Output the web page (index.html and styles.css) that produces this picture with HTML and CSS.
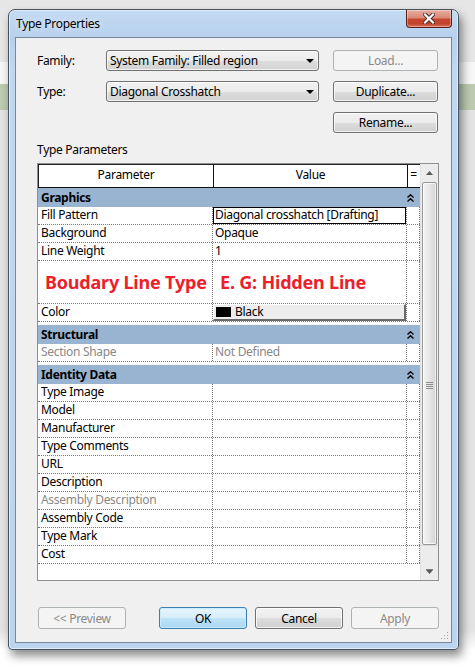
FILE: index.html
```html
<!DOCTYPE html>
<html>
<head>
<meta charset="utf-8">
<link rel="stylesheet" href="styles.css">
</head>
<body>
<div class="window">
  <div class="titlebar">
    <span class="title">Type Properties</span>
    <div class="close">
      <svg width="12" height="11" viewBox="0 0 12 11"><path d="M2 1.5 L10 9.5 M10 1.5 L2 9.5" stroke="#4a2420" stroke-width="4" stroke-linecap="square"/><path d="M2 1.5 L10 9.5 M10 1.5 L2 9.5" stroke="#ffffff" stroke-width="2.2" stroke-linecap="square"/></svg>
    </div>
  </div>
  <div class="client">
    <div class="selectors">
      <span class="lbl">Family:</span>
      <div class="combo"><span>System Family: Filled region</span><svg width="8" height="4" viewBox="0 0 8 4"><polygon points="0,0 8,0 4,4" fill="#000"/></svg></div>
      <button class="btn disabled">Load...</button>
      <span class="lbl">Type:</span>
      <div class="combo"><span>Diagonal Crosshatch</span><svg width="8" height="4" viewBox="0 0 8 4"><polygon points="0,0 8,0 4,4" fill="#000"/></svg></div>
      <button class="btn">Duplicate...</button>
      <span></span><span></span>
      <button class="btn">Rename...</button>
    </div>
    <div class="section-label">Type Parameters</div>
    <div class="table">
      <div class="grid">
        <div class="head">
          <div class="hc">Parameter</div>
          <div class="hc">Value</div>
          <div class="hc eq">=</div>
        </div>
        <div class="group first"><span>Graphics</span><svg class="chev" width="7" height="8" viewBox="0 0 7 8"><path d="M0.5 3.5 L3.5 0.8 L6.5 3.5 M0.5 7.5 L3.5 4.8 L6.5 7.5" stroke="#000" stroke-width="1.4" fill="none"/></svg></div>
        <div class="row"><div class="c p">Fill Pattern</div><div class="c v sel">Diagonal crosshatch [Drafting]</div><div class="c e"></div></div>
        <div class="row"><div class="c p">Background</div><div class="c v">Opaque</div><div class="c e"></div></div>
        <div class="row"><div class="c p">Line Weight</div><div class="c v">1</div><div class="c e"></div></div>
        <div class="row big"><div class="c p red">Boudary Line Type</div><div class="c v red">E. G: Hidden Line</div><div class="c e"></div></div>
        <div class="row"><div class="c p">Color</div><div class="c v"><div class="colorbtn"><span class="swatch"></span>Black</div></div><div class="c e"></div></div>
        <div class="group"><span>Structural</span><svg class="chev" width="7" height="8" viewBox="0 0 7 8"><path d="M0.5 3.5 L3.5 0.8 L6.5 3.5 M0.5 7.5 L3.5 4.8 L6.5 7.5" stroke="#000" stroke-width="1.4" fill="none"/></svg></div>
        <div class="row"><div class="c p dim">Section Shape</div><div class="c v dim">Not Defined</div><div class="c e"></div></div>
        <div class="group"><span>Identity Data</span><svg class="chev" width="7" height="8" viewBox="0 0 7 8"><path d="M0.5 3.5 L3.5 0.8 L6.5 3.5 M0.5 7.5 L3.5 4.8 L6.5 7.5" stroke="#000" stroke-width="1.4" fill="none"/></svg></div>
        <div class="row"><div class="c p">Type Image</div><div class="c v"></div><div class="c e"></div></div>
        <div class="row"><div class="c p">Model</div><div class="c v"></div><div class="c e"></div></div>
        <div class="row"><div class="c p">Manufacturer</div><div class="c v"></div><div class="c e"></div></div>
        <div class="row"><div class="c p">Type Comments</div><div class="c v"></div><div class="c e"></div></div>
        <div class="row"><div class="c p">URL</div><div class="c v"></div><div class="c e"></div></div>
        <div class="row"><div class="c p">Description</div><div class="c v"></div><div class="c e"></div></div>
        <div class="row"><div class="c p dim">Assembly Description</div><div class="c v"></div><div class="c e"></div></div>
        <div class="row"><div class="c p">Assembly Code</div><div class="c v"></div><div class="c e"></div></div>
        <div class="row"><div class="c p">Type Mark</div><div class="c v"></div><div class="c e"></div></div>
        <div class="row"><div class="c p">Cost</div><div class="c v"></div><div class="c e"></div></div>
      </div>
      <div class="scrollbar">
        <div class="sb-btn"><svg width="7" height="4" viewBox="0 0 7 4"><polygon points="0,4 3.5,0 7,4" fill="#5a5a5a"/></svg></div>
        <div class="thumb">
          <svg width="7" height="8" viewBox="0 0 7 8"><path d="M0 0.5 H7 M0 2.5 H7 M0 4.5 H7 M0 6.5 H7" stroke="#8c8c8c" stroke-width="1"/></svg>
        </div>
        <div class="sb-track"></div>
        <div class="sb-btn"><svg width="7" height="5" viewBox="0 0 7 5"><path d="M0 0.5 H7" stroke="#7a7a7a"/><polygon points="0,1 7,1 3.5,5" fill="#5a5a5a"/></svg></div>
      </div>
    </div>
    <div class="buttons">
      <button class="btn disabled preview">&lt;&lt; Preview</button>
      <button class="btn default">OK</button>
      <button class="btn">Cancel</button>
      <button class="btn disabled">Apply</button>
    </div>
    <svg class="grip" width="9" height="9" viewBox="0 0 9 9">
      <rect x="7" y="1" width="1" height="1" fill="#9aa4ad"/>
      <rect x="4" y="4" width="1" height="1" fill="#9aa4ad"/><rect x="7" y="4" width="1" height="1" fill="#9aa4ad"/>
      <rect x="1" y="7" width="1" height="1" fill="#9aa4ad"/><rect x="4" y="7" width="1" height="1" fill="#9aa4ad"/><rect x="7" y="7" width="1" height="1" fill="#9aa4ad"/>
    </svg>
  </div>
</div>
</body>
</html>
```

FILE: styles.css
```css
* { box-sizing: border-box; }

html, body {
  margin: 0;
  width: 475px;
  height: 669px;
  overflow: hidden;
}

body {
  font-family: "Noto Sans", "Segoe UI", sans-serif;
  font-size: 12px;
  letter-spacing: -0.3px;
  color: #000;
  background: linear-gradient(to bottom,
    #e6e6e6 0, #e6e6e6 62px,
    #f7f7f7 62px, #f7f7f7 84px,
    #bccab0 84px, #bccab0 110px,
    #e3e3e3 110px, #e3e3e3 630px,
    #ffffff 650px);
}

.window {
  margin: 9px 0 0 8px;
  width: 451px;
  height: 641px;
  border: 1px solid #46525e;
  border-radius: 7px 7px 4px 4px;
  background: linear-gradient(to bottom, #c3daf2 0, #b7d1ed 28px, #bfd7f0 60px, #bcd5ef 100%);
  box-shadow: inset 0 0 0 1px rgba(255,255,255,0.55), 3px 6px 10px rgba(0,0,0,0.45);
  padding: 0 6px 6px 6px;
  display: flex;
  flex-direction: column;
}

.titlebar {
  height: 27px;
  display: flex;
  align-items: flex-start;
}

.title {
  padding: 6px 0 0 1px;
  font-size: 12px;
  line-height: 15px;
  text-shadow: 0 0 6px rgba(255,255,255,0.9);
}

.close {
  margin-left: auto;
  width: 46px;
  height: 18px;
  border: 1px solid #5a2018;
  border-top: none;
  border-radius: 0 0 4px 4px;
  background: linear-gradient(to bottom, #e8ad9f 0%, #d98a77 45%, #c7462f 55%, #c2422c 80%, #d8735c 100%);
  box-shadow: inset 0 0 0 1px rgba(255,255,255,0.35);
  display: flex;
  align-items: center;
  justify-content: center;
}

.client {
  flex: 1;
  position: relative;
  border: 1px solid #76889a;
  background: #f0f0f0;
  padding: 12px 0 0 21px;
}

.selectors {
  display: grid;
  grid-template-columns: 69px 213px 119px;
  grid-template-rows: 21px 21px 21px;
  row-gap: 10px;
  align-items: center;
}

.lbl {
  line-height: 15px;
}

.combo {
  height: 21px;
  border: 1px solid #707070;
  border-radius: 3px;
  background: linear-gradient(to bottom, #f2f2f2 0%, #ebebeb 50%, #dddddd 51%, #d2d2d2 100%);
  box-shadow: inset 0 0 0 1px rgba(255,255,255,0.7);
  display: flex;
  align-items: center;
  justify-content: space-between;
  padding: 0 4px 0 3px;
  line-height: 15px;
}

.btn {
  font: inherit;
  letter-spacing: inherit;
  color: #000;
  width: 105px;
  height: 21px;
  justify-self: end;
  border: 1px solid #707070;
  border-radius: 3px;
  background: linear-gradient(to bottom, #f2f2f2 0%, #ebebeb 50%, #dddddd 51%, #cfcfcf 100%);
  box-shadow: inset 0 0 0 1px rgba(255,255,255,0.75);
  padding: 0;
  line-height: 15px;
}

.btn.disabled {
  color: #8a8a8a;
  border-color: #adb2b5;
  background: #f4f4f4;
  box-shadow: none;
}

.btn.default {
  border-color: #3c7fb1;
  background: linear-gradient(to bottom, #e5f4fc 0%, #d6eefb 50%, #bfe3f8 51%, #aad8f3 100%);
  box-shadow: inset 0 0 0 1px rgba(200,235,255,0.9);
}

.section-label {
  margin-top: 9px;
  height: 15px;
  line-height: 15px;
}

.table {
  margin-top: 6px;
  width: 402px;
  height: 418px;
  border: 1px solid #8c8f94;
  background: #ffffff;
  display: flex;
}

.grid {
  width: 382px;
  display: flex;
  flex-direction: column;
}

.head {
  display: grid;
  grid-template-columns: 175px 194px 13px;
  height: 24px;
  border-top: 1px solid #222;
  border-bottom: 1px solid #111;
  border-left: 1px solid #222;
}

.hc {
  border-right: 1px solid #111;
  text-align: center;
  line-height: 20px;
}

.hc.eq {
  padding-right: 1px;
}

.group {
  margin-top: 3px;
  height: 19px;
  background: #99b4d1;
  font-weight: bold;
  display: flex;
  align-items: center;
  justify-content: space-between;
  padding: 0 6px 0 3px;
  line-height: 15px;
}

.group.first {
  margin-top: 0;
}

.row {
  display: grid;
  grid-template-columns: 175px 194px 13px;
  height: 18px;
  border-bottom: 1px dotted #7a7a7a;
}

.row.big {
  height: 43px;
}

.c {
  border-right: 1px dotted #7a7a7a;
  line-height: 16px;
  white-space: nowrap;
  overflow: hidden;
}

.c.p {
  padding-left: 3px;
}

.c.v {
  padding-left: 2px;
}

.c.sel {
  box-shadow: inset 0 0 0 1px #000;
  padding-top: 0;
}

.dim {
  color: #888888;
}

.red {
  color: #ec1f2b;
  font-size: 18px;
  font-weight: bold;
  letter-spacing: -0.2px;
  display: flex;
  align-items: center;
  padding-left: 7px !important;
}

.c.v.red {
  padding-left: 7px !important;
}

.colorbtn {
  height: 17px;
  margin-left: -2px;
  background: #ededed;
  border-top: 1px solid #ffffff;
  border-left: 1px solid #ffffff;
  border-right: 2px solid #6a6a6a;
  border-bottom: 2px solid #6a6a6a;
  display: flex;
  align-items: center;
  padding-left: 2px;
  line-height: 14px;
}

.swatch {
  width: 15px;
  height: 10px;
  background: #000;
  margin-right: 4px;
}

.scrollbar {
  width: 18px;
  background: #ececec;
  border-left: 1px solid #e2e2e2;
  display: flex;
  flex-direction: column;
  align-items: center;
}

.sb-btn {
  height: 18px;
  width: 100%;
  display: flex;
  align-items: center;
  justify-content: center;
}

.thumb {
  width: 15px;
  height: 363px;
  border: 1px solid #979797;
  border-radius: 2px;
  background: linear-gradient(to right, #f4f4f4 0%, #e6e6e6 50%, #d3d3d3 100%);
  box-shadow: inset 0 0 0 1px rgba(255,255,255,0.7);
  display: flex;
  justify-content: center;
  padding-top: 199px;
}

.sb-track {
  flex: 1;
  width: 100%;
  border-top: 1px solid #dcdcdc;
}

.buttons {
  margin-top: 26px;
  width: 402px;
  display: flex;
  gap: 8px;
}

.buttons .btn {
  width: 88px;
  height: 22px;
}

.buttons .preview {
  margin-left: 1px;
  margin-right: 25px;
}

.grip {
  position: absolute;
  right: 2px;
  bottom: 2px;
}
```
